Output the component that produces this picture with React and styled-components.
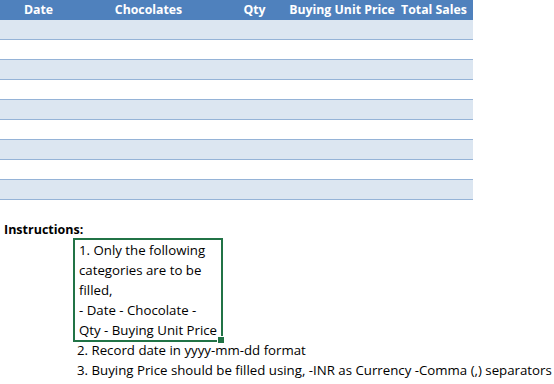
import styled, { createGlobalStyle } from "styled-components";

const GlobalStyle = createGlobalStyle`
    body {
        margin: 0;
        background: #ffffff;
        font-family: "Open Sans", "Liberation Sans", sans-serif;
    }
`;

const columns = [
    { label: "Date", width: 77 },
    { label: "Chocolates", width: 143 },
    { label: "Qty", width: 69 },
    { label: "Buying Unit Price", width: 106 },
    { label: "Total Sales", width: 78 },
];

const rows = [0, 1, 2, 3, 4, 5, 6, 7, 8];

const instructions = [
    "2. Record date in yyyy-mm-dd format",
    "3. Buying Price should be filled using, -INR as Currency -Comma (,) separators",
];

export default function App() {
    return (
        <>
            <GlobalStyle />
            <SPage>
                <STable>
                    <SHeader>
                        {columns.map((c) => (
                            <SHeadCell key={c.label} $width={c.width}>{c.label}</SHeadCell>
                        ))}
                    </SHeader>
                    {rows.map((r) => (
                        <SRow key={r} $shaded={r % 2 === 0} />
                    ))}
                </STable>

                <SInstructions>
                    <STitle>Instructions:</STitle>
                    <SList>
                        <SSelected>
                            <SLine>1. Only the following</SLine>
                            <SLine>categories are to be</SLine>
                            <SLine>filled,</SLine>
                            <SLine>- Date - Chocolate -</SLine>
                            <SLine>Qty - Buying Unit Price</SLine>
                            <SHandle />
                        </SSelected>
                        {instructions.map((t) => (
                            <SLine key={t}>{t}</SLine>
                        ))}
                    </SList>
                </SInstructions>
            </SPage>
        </>
    );
}

const SPage = styled.div`
    width: 554px;
    height: 384px;
    overflow: hidden;
    font-size: 13.25px;
    color: #000;
`;

const STable = styled.div`
    width: 473px;
`;

const SHeader = styled.div`
    display: flex;
    height: 20px;
    background: #4f81bd;
`;

const SHeadCell = styled.div`
    width: ${(p) => p.$width}px;
    text-align: center;
    color: #ffffff;
    font-size: 12.3px;
    font-weight: 700;
    line-height: 19px;
    white-space: nowrap;
`;

const SRow = styled.div`
    height: 19px;
    background: ${(p) => (p.$shaded ? "#dce6f1" : "#ffffff")};
    border-bottom: 1px solid #95b3d7;
`;

const SInstructions = styled.div`
    padding-top: 20px;
`;

const STitle = styled.div`
    padding-left: 4px;
    font-weight: 700;
    font-size: 12.5px;
    line-height: 20px;
`;

const SList = styled.div`
    padding-left: 73px;
`;

const SSelected = styled.div`
    position: relative;
    width: 146px;
    border: 2px solid #217346;
    margin-top: -2px;
    margin-bottom: -2px;
`;

const SLine = styled.div`
    padding-left: 4px;
    line-height: 20px;
    white-space: nowrap;
`;

const SHandle = styled.div`
    position: absolute;
    right: -4px;
    bottom: -4px;
    width: 6px;
    height: 6px;
    background: #217346;
    border: 1px solid #fff;
`;
